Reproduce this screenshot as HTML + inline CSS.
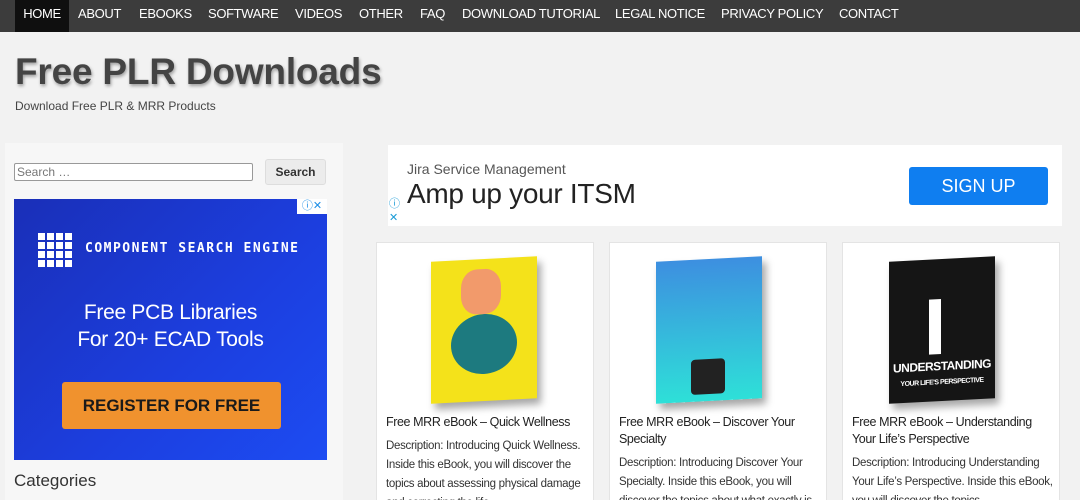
<!DOCTYPE html>
<html><head><meta charset="utf-8"><style>
*{margin:0;padding:0;box-sizing:border-box}
html,body{width:1080px;height:500px;overflow:hidden}
body{background:#f2f2f2;font-family:"Liberation Sans",sans-serif;position:relative;color:#333}
.nav{position:absolute;left:0;top:0;width:1080px;height:32px;background:#3c3c3c}
.nav span{position:absolute;top:0;height:32px;line-height:27px;color:#fff;font-size:13px;letter-spacing:-0.35px}
.home{background:#0f0f0f;}
.abs{position:absolute}
.card{position:absolute;top:242px;width:218px;height:270px;background:#fff;border:1px solid #e4e4e4}
.card h3{position:absolute;left:9px;top:171px;width:205px;font-weight:normal;font-size:12.5px;line-height:17px;color:#222;letter-spacing:-0.4px}
.card p{position:absolute;left:9px;width:205px;font-size:11.5px;line-height:19px;color:#333;letter-spacing:-0.3px}
.book{position:absolute;top:16px;height:142px;width:106px;transform:skewY(-3deg);box-shadow:4px 6px 8px rgba(0,0,0,.35);overflow:hidden}
</style></head><body>
<div class="nav">
<span class="home" style="left:15px;width:54px;text-align:center">HOME</span>
<span style="left:78px">ABOUT</span>
<span style="left:139px">EBOOKS</span>
<span style="left:208px">SOFTWARE</span>
<span style="left:295px">VIDEOS</span>
<span style="left:359px">OTHER</span>
<span style="left:420px">FAQ</span>
<span style="left:462px">DOWNLOAD TUTORIAL</span>
<span style="left:615px">LEGAL NOTICE</span>
<span style="left:721px">PRIVACY POLICY</span>
<span style="left:839px">CONTACT</span>
</div>
<div class="abs" style="left:15px;top:51px;font-size:37px;font-weight:bold;color:#444;text-shadow:1px 2px 3px rgba(0,0,0,.35);letter-spacing:-0.2px">Free PLR Downloads</div>
<div class="abs" style="left:15px;top:99px;font-size:12px;color:#444">Download Free PLR &amp; MRR Products</div>

<div class="abs" style="left:5px;top:143px;width:338px;height:360px;background:#f7f7f7"></div>
<div class="abs" style="left:14px;top:163px;width:239px;height:18px;background:#fff;border:1px solid #999;border-radius:2px;font-size:12px;color:#777;padding-left:2px;line-height:16px">Search …</div>
<div class="abs" style="left:265px;top:159px;width:61px;height:26px;background:#ececec;border:1px solid #ddd;border-radius:3px;font-size:12px;font-weight:bold;text-align:center;line-height:24px;color:#333">Search</div>
<div class="abs" style="left:14px;top:199px;width:313px;height:261px;background:linear-gradient(135deg,#1a2fb8,#1c3fe0 60%,#1d4cf2);overflow:hidden">
 <div class="abs" style="left:24px;top:32px;width:36px;height:36px;background:repeating-linear-gradient(90deg,#fff 0 7px,transparent 7px 9px),transparent;-webkit-mask:repeating-linear-gradient(0deg,#000 0 7px,transparent 7px 9px)"></div>
 <div class="abs" style="left:71px;top:42px;color:#fff;font-family:'DejaVu Sans Mono',monospace;font-weight:bold;font-size:13px;letter-spacing:1.5px">COMPONENT SEARCH ENGINE</div>
 <div class="abs" style="left:0;width:313px;top:100px;text-align:center;color:#fff;font-size:21px;line-height:27px;letter-spacing:-0.3px">Free PCB Libraries<br>For 20+ ECAD Tools</div>
 <div class="abs" style="left:48px;top:183px;width:219px;height:47px;background:#f0922e;border-radius:3px;text-align:center;line-height:47px;font-weight:bold;font-size:17px;color:#1a1a1a">REGISTER FOR FREE</div>
 <div class="abs" style="right:0;top:0;width:30px;height:15px;background:#fff;color:#1a8de6;font-size:11px;line-height:15px;text-align:center">ⓘ✕</div>
</div>
<div class="abs" style="left:14px;top:471px;font-size:17px;color:#333">Categories</div>

<div class="abs" style="left:388px;top:145px;width:674px;height:81px;background:#fff">
 <div class="abs" style="left:19px;top:16px;font-size:14px;color:#555">Jira Service Management</div>
 <div class="abs" style="left:19px;top:33px;font-size:28px;color:#222;letter-spacing:-0.3px">Amp up your ITSM</div>
 <div class="abs" style="left:521px;top:22px;width:139px;height:38px;background:#0f7ef0;border-radius:3px;color:#fff;font-size:18px;text-align:center;line-height:38px">SIGN UP</div>
 <div class="abs" style="left:1px;top:52px;color:#1a9bd6;font-size:11px;line-height:14px">ⓘ<br>✕</div>
</div>

<div class="card" style="left:376px">
 <div class="book" style="left:54px;background:#f4e21a"><div style="position:absolute;left:20px;top:55px;width:66px;height:60px;border-radius:50%;background:#1d7a7f"></div><div style="position:absolute;left:30px;top:10px;width:40px;height:45px;border-radius:40%;background:#f29a6b"></div></div>
 <h3>Free MRR eBook – Quick Wellness</h3>
 <p style="top:194px">Description: Introducing Quick Wellness. Inside this eBook, you will discover the topics about assessing physical damage and correcting the life.</p>
</div>
<div class="card" style="left:609px">
 <div class="book" style="left:46px;background:linear-gradient(#3d8fe0,#2ee0d8)"><div style="position:absolute;left:35px;top:100px;width:34px;height:35px;background:#222;border-radius:4px"></div></div>
 <h3>Free MRR eBook – Discover Your Specialty</h3>
 <p style="top:211px">Description: Introducing Discover Your Specialty. Inside this eBook, you will discover the topics about what exactly is</p>
</div>
<div class="card" style="left:842px">
 <div class="book" style="left:46px;background:#151515"><div style="position:absolute;left:40px;top:40px;width:12px;height:55px;background:#fff"></div><div style="position:absolute;left:2px;top:100px;width:102px;font-size:12px;font-weight:bold;color:#fff;text-align:center;line-height:14px;letter-spacing:-0.5px">UNDERSTANDING<br><span style="font-size:7px">YOUR LIFE'S PERSPECTIVE</span></div></div>
 <h3>Free MRR eBook – Understanding Your Life’s Perspective</h3>
 <p style="top:211px">Description: Introducing Understanding Your Life’s Perspective. Inside this eBook, you will discover the topics</p>
</div>
</body></html>
